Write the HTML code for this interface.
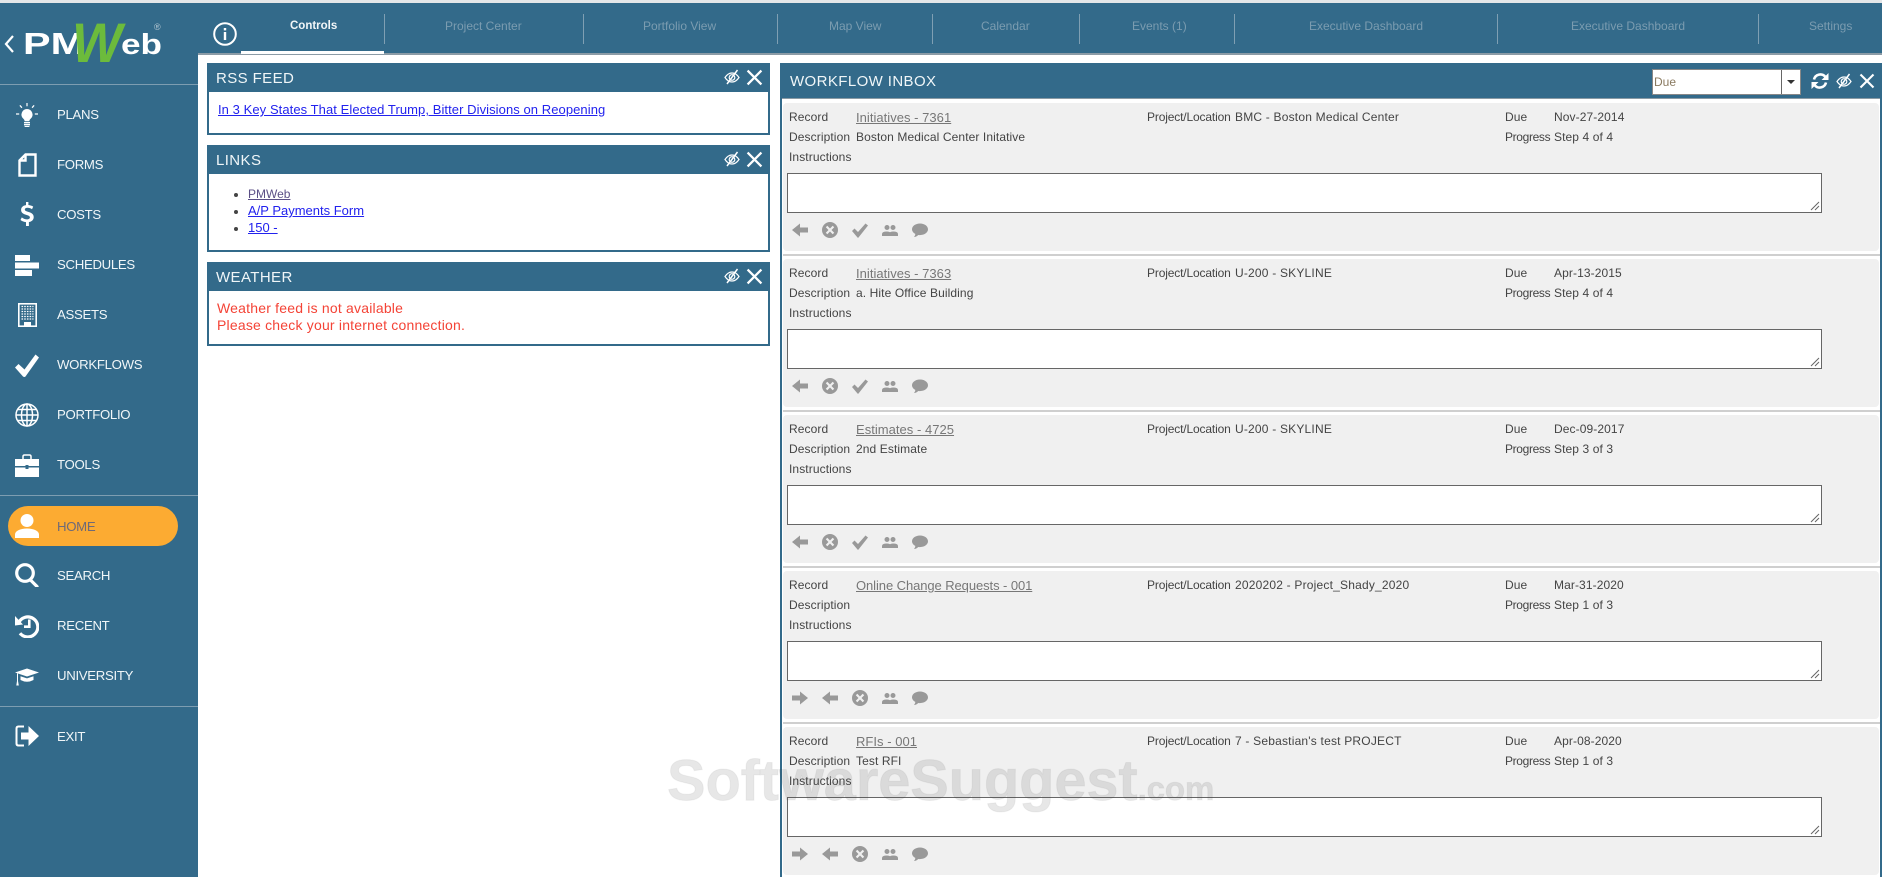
<!DOCTYPE html>
<html><head><meta charset="utf-8"><title>PMWeb</title>
<style>
*{box-sizing:border-box}
html,body{margin:0;padding:0;width:1882px;height:877px;overflow:hidden;background:#fff;font-family:"Liberation Sans",sans-serif;color:#444}
.a{position:absolute;white-space:nowrap}
#top{position:absolute;left:0;top:0;width:1882px;height:54px;background:#336a8a;border-top:3px solid #e4e6e8}
#line{position:absolute;left:198px;top:53px;width:1684px;height:2px;background:#8b9ba6}
#ul{position:absolute;left:241px;top:51px;width:143px;height:3px;background:#fff}
#side{position:absolute;left:0;top:54px;width:198px;height:823px;background:#336a8a}
.sep{position:absolute;top:14px;width:1px;height:30px;background:#7f9fb3}
.t{position:absolute;top:18px;font-size:12px;line-height:16px;color:#7b9cb0;white-space:nowrap;transform-origin:0 50%}
.hr{position:absolute;left:0;width:198px;height:1px;background:#7d9db1}
.n{position:absolute;left:57px;font-size:13.2px;line-height:18px;color:#f0f6f8;white-space:nowrap;letter-spacing:-.3px;margin-top:1px}
.i{position:absolute;left:15px;width:24px;height:24px;fill:#fff}
.p{position:absolute;left:207px;width:563px;background:#fff;border:2px solid #336a8a}
.ph{position:absolute;left:0;top:0;right:0;height:27px;background:#336a8a}
.pt{position:absolute;left:7px;top:4px;font-size:15px;line-height:20px;color:#f0f6f8;letter-spacing:.4px}
.ey{position:absolute;left:515px;top:4px;width:16px;height:16px}
.xx{position:absolute;left:537px;top:4px;width:17px;height:17px}
a{color:#2222ee;text-decoration:underline}
.tx{position:absolute;font-size:12px;line-height:16px;color:#444;white-space:nowrap}
.p .tx{font-size:13px}
.c{position:absolute;left:783px;width:1096px;height:148px;background:#f0f0f0;border-radius:4px}
.c .tx{letter-spacing:.1px}
.c .tx a{font-size:13px;letter-spacing:.03px}
.c .pl{letter-spacing:-.15px}
.c .pr{letter-spacing:-.35px}
.c .pv{letter-spacing:.2px}
.sl{position:absolute;left:783px;width:1097px;height:1px;background:#cfcfcf}
.ta{position:absolute;left:4px;top:70px;width:1035px;height:40px;background:#fff;border:1px solid #666}
.ta svg{position:absolute;right:1px;bottom:1px}
.g{position:absolute;top:119px;width:16px;height:16px;fill:#999}
#wm{position:absolute;left:667px;top:746px;font-size:57.8px;line-height:70px;font-weight:bold;color:rgba(70,70,70,.13);white-space:nowrap;letter-spacing:-.1px;-webkit-text-stroke:1px rgba(70,70,70,.06)}
#wm span{font-size:33px}
</style></head><body>
<div id="top"></div>
<div id="side"></div>
<div id="line"></div><div id="ul"></div>

<svg class="a" style="left:0;top:18px" width="190" height="50" viewBox="0 18 190 50">
<path d="M13 36L6 44L13 52" fill="none" stroke="#fff" stroke-width="2.2"/>
<text x="23" y="54" font-family="Liberation Sans" font-weight="bold" font-size="31" fill="#fff" textLength="62" lengthAdjust="spacingAndGlyphs">PM</text>
<text x="121" y="54" font-family="Liberation Sans" font-weight="bold" font-size="29" fill="#fff" textLength="41" lengthAdjust="spacingAndGlyphs">eb</text>
<text x="72" y="62" font-family="Liberation Sans" font-style="italic" font-weight="bold" font-size="56" fill="#6cbb3c" textLength="50" lengthAdjust="spacingAndGlyphs">W</text>
<text x="154" y="30" font-family="Liberation Sans" font-size="9" fill="#b5c8d3">®</text>
</svg>
<svg class="a" style="left:212px;top:21px" width="26" height="26" viewBox="0 0 26 26"><circle cx="13" cy="13" r="10.8" fill="none" stroke="#fff" stroke-width="2"/><rect x="11.8" y="11" width="2.4" height="8" fill="#fff"/><rect x="11.8" y="7" width="2.4" height="2.4" fill="#fff"/></svg>

<div class="t" style="left:290px;color:#f2f6f8;font-weight:bold;font-size:11.5px">Controls</div>
<div class="sep" style="left:384px"></div><div class="t" style="left:445px">Project Center</div>
<div class="sep" style="left:583px"></div><div class="t" style="left:643px">Portfolio View</div>
<div class="sep" style="left:777px"></div><div class="t" style="left:829px">Map View</div>
<div class="sep" style="left:932px"></div><div class="t" style="left:981px">Calendar</div>
<div class="sep" style="left:1079px"></div><div class="t" style="left:1132px">Events (1)</div>
<div class="sep" style="left:1234px"></div><div class="t" style="left:1309px">Executive Dashboard</div>
<div class="sep" style="left:1497px"></div><div class="t" style="left:1571px">Executive Dashboard</div>
<div class="sep" style="left:1758px"></div><div class="t" style="left:1809px">Settings</div>

<div class="hr" style="top:84px"></div>
<div class="hr" style="top:495px"></div>
<div class="hr" style="top:706px"></div>
<div class="a" style="left:8px;top:506px;width:170px;height:40px;border-radius:20px;background:#fcab32"></div>

<div class="n" style="top:105px">PLANS</div>
<div class="n" style="top:155px">FORMS</div>
<div class="n" style="top:205px">COSTS</div>
<div class="n" style="top:255px">SCHEDULES</div>
<div class="n" style="top:305px">ASSETS</div>
<div class="n" style="top:355px">WORKFLOWS</div>
<div class="n" style="top:405px">PORTFOLIO</div>
<div class="n" style="top:455px">TOOLS</div>
<div class="n" style="top:517px;color:#6f6a78">HOME</div>
<div class="n" style="top:566px">SEARCH</div>
<div class="n" style="top:616px">RECENT</div>
<div class="n" style="top:666px">UNIVERSITY</div>
<div class="n" style="top:727px">EXIT</div>

<svg class="i" style="top:103px" viewBox="0 0 24 24"><path d="M12 6a5.6 5.6 0 0 0-3.6 9.8c.9.8 1.2 1.6 1.2 2.4h4.8c0-.8.3-1.6 1.2-2.4A5.6 5.6 0 0 0 12 6z"/><rect x="9" y="19" width="6" height="1.4"/><rect x="9" y="21" width="6" height="1.4"/><rect x="9.6" y="23" width="4.8" height="1"/><path d="M11.4 0h1.2v3.2h-1.2zM4.4 2.8l1-.8 2 2.3-1 .8zM19.6 2.8l-1-.8-2 2.3 1 .8zM1 10.4h3.2v1.2H1zM19.8 10.4H23v1.2h-3.2z"/></svg>
<svg class="i" style="top:153px" viewBox="0 0 24 24"><path d="M4.5 7.5L10.5 1.5H20.5V22.5H4.5Z M10.5 1.5V7.5H4.5" fill="none" stroke="#fff" stroke-width="2.4"/></svg>
<svg class="i" style="top:202px" viewBox="0 0 24 24"><path d="M11 0h2.4v3c2 .2 3.600 .8 4.800 1.600l-1.200 2.600c-1.400-.9-3-1.400-4.500-1.400-1.700 0-2.700.6-2.700 1.700 0 1.200 1.200 1.700 3.500 2.400 3.200 1 5.400 2.100 5.400 5.200 0 2.800-2 4.500-4.800 4.900V24H11v-3.900c-2.200-.2-4.200-1-5.500-2.100l1.300-2.600c1.500 1.200 3.500 2 5.100 2 1.900 0 3-.8 3-2 0-1.300-1.300-1.800-3.600-2.500-3.100-1-5.200-2.100-5.200-5 0-2.600 1.900-4.400 4.900-4.800z"/></svg>
<svg class="i" style="top:253px" viewBox="0 0 24 24"><rect x="0" y="2" width="15" height="6"/><rect x="0" y="9.500" width="24" height="6"/><rect x="0" y="17" width="17" height="6"/></svg>
<svg class="i" style="top:303px" viewBox="0 0 24 24"><rect x="3.800" y=".8" width="17.400" height="22.400" fill="none" stroke="#fff" stroke-width="1.600"/><path d="M6.500 3.500h12M6.500 6h12M6.500 8.500h12M6.500 11h12M6.500 13.500h12M6.500 16h12" stroke="#fff" stroke-width="1.300" stroke-dasharray="1.600 1.100" fill="none"/><rect x="9" y="19" width="7" height="5"/></svg>
<svg class="i" style="top:353px" viewBox="0 0 24 24"><path d="M0 14.500L3.500 11 9.500 16.500 20.500 1.500 24 4.500 10.500 23.500Q9.500 24.500 8 23.500Z"/></svg>
<svg class="i" style="top:403px" viewBox="0 0 24 24" fill="none"><g fill="none" stroke="#fff" stroke-width="1.500"><circle cx="12" cy="12" r="11"/><ellipse cx="12" cy="12" rx="5.500" ry="11"/><path d="M12 1v22M1.300 12h21.400M2.700 6.500h18.600M2.700 17.500h18.600"/></g></svg>
<svg class="i" style="top:453px" viewBox="0 0 24 24"><path d="M0 6h24v7H13.500v-1h-3v1H0zM0 14.500h10.500v1.500h3v-1.500H24V24H0z"/><path d="M8 6V3.500Q8 2 9.500 2h5Q16 2 16 3.500V6" fill="none" stroke="#fff" stroke-width="1.500"/></svg>
<svg class="i" style="top:514px" viewBox="0 0 24 24"><circle cx="12" cy="6.500" r="6.500"/><path d="M0 24v-3.500C0 17 5 14.500 12 14.500S24 17 24 20.500V24z"/></svg>
<svg class="i" style="top:563px" viewBox="0 0 24 24"><circle cx="10" cy="10" r="8.300" fill="none" stroke="#fff" stroke-width="3.200"/><path d="M16 17.500L22 23.500" stroke="#fff" stroke-width="3.200" stroke-linecap="round"/></svg>
<svg class="i" style="top:614px" viewBox="0 0 24 24"><path d="M3.600 9A10 10 0 1 1 5 19.200" fill="none" stroke="#fff" stroke-width="3.200"/><path d="M0 2l8 8.500-8 1z"/><path d="M13 5.500h2.600V14H9v-2.600h4z"/></svg>
<svg class="i" style="top:663px" viewBox="0 0 24 24"><path d="M0 9.500L12 5.500 24 9.500 12 13.500z"/><path d="M5.500 13.200L12 15.400 18.500 13.200V17Q12 20.500 5.500 17z"/><path d="M2 10.500h1V18l.8 4.500H1.300L2 18z"/></svg>
<svg class="i" style="top:724px" viewBox="0 0 24 24"><path d="M9 2.500H3.500Q1.500 2.500 1.500 4.500V19.500Q1.500 21.500 3.500 21.500H9" fill="none" stroke="#fff" stroke-width="2"/><path d="M6 8.500h7.500V2L24 12 13.500 22v-6.500H6z"/></svg>

<!-- panels -->
<div class="p" style="top:63px;height:72px"><div class="ph"></div><div class="pt">RSS FEED</div>
<svg class="ey" viewBox="0 0 16 16"><use href="#eye"/></svg><svg class="xx" viewBox="0 0 16 16"><use href="#x"/></svg>
<div class="tx" style="left:9px;top:37px;letter-spacing:.07px"><a href="#">In 3 Key States That Elected Trump, Bitter Divisions on Reopening</a></div></div>

<div class="p" style="top:145px;height:107px"><div class="ph"></div><div class="pt">LINKS</div>
<svg class="ey" viewBox="0 0 16 16"><use href="#eye"/></svg><svg class="xx" viewBox="0 0 16 16"><use href="#x"/></svg>
<div class="a" style="left:25px;top:46px;width:4px;height:4px;border-radius:50%;background:#444"></div>
<div class="a" style="left:25px;top:63px;width:4px;height:4px;border-radius:50%;background:#444"></div>
<div class="a" style="left:25px;top:80px;width:4px;height:4px;border-radius:50%;background:#444"></div>
<div class="tx" style="left:39px;top:39px"><a href="#" style="color:#5b4f86;font-size:12px">PMWeb</a></div>
<div class="tx" style="left:39px;top:56px"><a href="#">A/P Payments Form</a></div>
<div class="tx" style="left:39px;top:73px"><a href="#">150 -</a></div></div>

<div class="p" style="top:262px;height:84px"><div class="ph"></div><div class="pt">WEATHER</div>
<svg class="ey" viewBox="0 0 16 16"><use href="#eye"/></svg><svg class="xx" viewBox="0 0 16 16"><use href="#x"/></svg>
<div class="tx" style="left:8px;top:36px;color:#f44336;font-size:14px;line-height:17px;letter-spacing:.2px;white-space:normal;width:500px">Weather feed is not available<br>Please check your internet connection.</div></div>

<svg width="0" height="0" style="position:absolute"><defs>
<g id="eye" fill="none" stroke="#fff"><path d="M1 8.500C3 5.500 5.500 4 8 4s5 1.500 7 4.500c-2 3-4.500 4.500-7 4.500S3 11.500 1 8.500z" stroke-width="1.200"/><circle cx="8" cy="8.500" r="2.800" stroke-width="1.200"/><path d="M3 15L13.500 1" stroke-width="1.500"/></g>
<path id="x" d="M1.500 1.500L14.500 14.500M14.500 1.500L1.500 14.500" stroke="#fff" stroke-width="2.100" fill="none"/>
<path id="gl" d="M16 5.500H8V1.500L0 8l8 6.500v-4h8z"/>
<path id="gr" d="M0 5.500h8V1.500L16 8l-8 6.500v-4H0z"/>
<path id="gx" fill-rule="evenodd" d="M8 0a8 8 0 1 1 0 16A8 8 0 0 1 8 0zM5.300 3.800L3.800 5.300 6.500 8 3.800 10.700l1.500 1.500L8 9.500l2.700 2.700 1.500-1.500L9.500 8l2.700-2.700-1.500-1.500L8 6.500z"/>
<path id="gc" d="M0 9l2.500-2.500L6 10 13.500 1.500 16 3.500 6.500 15.500Q6 16 5.500 15.500z"/>
<path id="gp" d="M5 3a2.500 2.500 0 1 1 0 5 2.500 2.500 0 0 1 0-5zM11 3a2.500 2.500 0 1 1 0 5 2.500 2.500 0 0 1 0-5zM0 14v-2Q0 9.500 5 9.500q2.200 0 3 .8.800-.8 3-.8 5 0 5 2.500v2z"/>
<path id="gs" d="M8 1.500c4.400 0 8 2.500 8 5.800s-3.600 5.800-8 5.800c-.6 0-1.200 0-1.800-.1C5 14.200 3.500 15 2 15c.8-.8 1.300-2 1.300-3.100C1.300 10.900 0 9.200 0 7.300 0 4 3.600 1.500 8 1.500z"/>
<path id="rs" d="M1 9L9 1M5 9L9 5" stroke="#666" stroke-width="1" fill="none"/>
</defs></svg>

<!-- workflow -->
<div class="a" style="left:780px;top:63px;width:1102px;height:814px;border-left:2px solid #336a8a;border-right:2px solid #336a8a"></div>
<div class="a" style="left:780px;top:63px;width:1102px;height:35px;background:#336a8a"></div>
<div class="a" style="left:782px;top:98px;width:1098px;height:1px;background:#8a9aa4"></div>
<div class="a" style="left:790px;top:72px;font-size:15px;line-height:20px;color:#f0f6f8;letter-spacing:.4px">WORKFLOW INBOX</div>
<div class="a" style="left:1652px;top:69px;width:149px;height:26px;background:#fff;border:1px solid #888"></div>
<div class="a" style="left:1654px;top:74px;font-size:12px;line-height:16px;color:#8a7a60">Due</div>
<div class="a" style="left:1781px;top:70px;width:1px;height:24px;background:#666"></div>
<div class="a" style="left:1787px;top:80px;width:0;height:0;border-left:4px solid transparent;border-right:4px solid transparent;border-top:4px solid #333"></div>
<svg class="a" style="left:1811px;top:72px" width="18" height="18" viewBox="0 0 18 18"><path d="M3 7.500A6.500 6.500 0 0 1 14.500 5M15 10.500A6.500 6.500 0 0 1 3.500 13" fill="none" stroke="#fff" stroke-width="2.600"/><path d="M17.500 1v7h-7zM.5 17v-7h7z" fill="#fff"/></svg>
<svg class="a" style="left:1836px;top:73px" width="16" height="16" viewBox="0 0 16 16"><use href="#eye"/></svg>
<svg class="a" style="left:1859px;top:73px" width="16" height="16" viewBox="0 0 16 16"><use href="#x"/></svg>

<div class="sl" style="top:254px;height:2px"></div>
<div class="sl" style="top:410px;height:2px"></div>
<div class="sl" style="top:566px;height:2px"></div>
<div class="sl" style="top:722px;height:2px"></div>

<!-- card 1 -->
<div class="c" style="top:103px">
<div class="tx" style="left:6px;top:6px">Record</div><div class="tx" style="left:73px;top:7px"><a href="#" style="color:#777">Initiatives - 7361</a></div>
<div class="tx pl" style="left:364px;top:6px">Project/Location</div><div class="tx pv" style="left:452px;top:6px">BMC - Boston Medical Center</div>
<div class="tx" style="left:722px;top:6px">Due</div><div class="tx" style="left:771px;top:6px">Nov-27-2014</div>
<div class="tx" style="left:6px;top:26px">Description</div><div class="tx" style="left:73px;top:26px">Boston Medical Center Initative</div>
<div class="tx pr" style="left:722px;top:26px">Progress</div><div class="tx" style="left:771px;top:26px">Step 4 of 4</div>
<div class="tx" style="left:6px;top:46px">Instructions</div>
<div class="ta"><svg width="10" height="10" viewBox="0 0 10 10"><use href="#rs"/></svg></div>
<svg class="g" style="left:9px" viewBox="0 0 16 16"><use href="#gl"/></svg><svg class="g" style="left:39px" viewBox="0 0 16 16"><use href="#gx"/></svg><svg class="g" style="left:69px" viewBox="0 0 16 16"><use href="#gc"/></svg><svg class="g" style="left:99px" viewBox="0 0 16 16"><use href="#gp"/></svg><svg class="g" style="left:129px" viewBox="0 0 16 16"><use href="#gs"/></svg>
</div>
<!-- card 2 -->
<div class="c" style="top:259px">
<div class="tx" style="left:6px;top:6px">Record</div><div class="tx" style="left:73px;top:7px"><a href="#" style="color:#777">Initiatives - 7363</a></div>
<div class="tx pl" style="left:364px;top:6px">Project/Location</div><div class="tx pv" style="left:452px;top:6px">U-200 - SKYLINE</div>
<div class="tx" style="left:722px;top:6px">Due</div><div class="tx" style="left:771px;top:6px">Apr-13-2015</div>
<div class="tx" style="left:6px;top:26px">Description</div><div class="tx" style="left:73px;top:26px">a. Hite Office Building</div>
<div class="tx pr" style="left:722px;top:26px">Progress</div><div class="tx" style="left:771px;top:26px">Step 4 of 4</div>
<div class="tx" style="left:6px;top:46px">Instructions</div>
<div class="ta"><svg width="10" height="10" viewBox="0 0 10 10"><use href="#rs"/></svg></div>
<svg class="g" style="left:9px" viewBox="0 0 16 16"><use href="#gl"/></svg><svg class="g" style="left:39px" viewBox="0 0 16 16"><use href="#gx"/></svg><svg class="g" style="left:69px" viewBox="0 0 16 16"><use href="#gc"/></svg><svg class="g" style="left:99px" viewBox="0 0 16 16"><use href="#gp"/></svg><svg class="g" style="left:129px" viewBox="0 0 16 16"><use href="#gs"/></svg>
</div>
<!-- card 3 -->
<div class="c" style="top:415px">
<div class="tx" style="left:6px;top:6px">Record</div><div class="tx" style="left:73px;top:7px"><a href="#" style="color:#777">Estimates - 4725</a></div>
<div class="tx pl" style="left:364px;top:6px">Project/Location</div><div class="tx pv" style="left:452px;top:6px">U-200 - SKYLINE</div>
<div class="tx" style="left:722px;top:6px">Due</div><div class="tx" style="left:771px;top:6px">Dec-09-2017</div>
<div class="tx" style="left:6px;top:26px">Description</div><div class="tx" style="left:73px;top:26px">2nd Estimate</div>
<div class="tx pr" style="left:722px;top:26px">Progress</div><div class="tx" style="left:771px;top:26px">Step 3 of 3</div>
<div class="tx" style="left:6px;top:46px">Instructions</div>
<div class="ta"><svg width="10" height="10" viewBox="0 0 10 10"><use href="#rs"/></svg></div>
<svg class="g" style="left:9px" viewBox="0 0 16 16"><use href="#gl"/></svg><svg class="g" style="left:39px" viewBox="0 0 16 16"><use href="#gx"/></svg><svg class="g" style="left:69px" viewBox="0 0 16 16"><use href="#gc"/></svg><svg class="g" style="left:99px" viewBox="0 0 16 16"><use href="#gp"/></svg><svg class="g" style="left:129px" viewBox="0 0 16 16"><use href="#gs"/></svg>
</div>
<!-- card 4 -->
<div class="c" style="top:571px">
<div class="tx" style="left:6px;top:6px">Record</div><div class="tx" style="left:73px;top:7px"><a href="#" style="color:#777;letter-spacing:-.08px">Online Change Requests - 001</a></div>
<div class="tx pl" style="left:364px;top:6px">Project/Location</div><div class="tx pv" style="left:452px;top:6px">2020202 - Project_Shady_2020</div>
<div class="tx" style="left:722px;top:6px">Due</div><div class="tx" style="left:771px;top:6px">Mar-31-2020</div>
<div class="tx" style="left:6px;top:26px">Description</div>
<div class="tx pr" style="left:722px;top:26px">Progress</div><div class="tx" style="left:771px;top:26px">Step 1 of 3</div>
<div class="tx" style="left:6px;top:46px">Instructions</div>
<div class="ta"><svg width="10" height="10" viewBox="0 0 10 10"><use href="#rs"/></svg></div>
<svg class="g" style="left:9px" viewBox="0 0 16 16"><use href="#gr"/></svg><svg class="g" style="left:39px" viewBox="0 0 16 16"><use href="#gl"/></svg><svg class="g" style="left:69px" viewBox="0 0 16 16"><use href="#gx"/></svg><svg class="g" style="left:99px" viewBox="0 0 16 16"><use href="#gp"/></svg><svg class="g" style="left:129px" viewBox="0 0 16 16"><use href="#gs"/></svg>
</div>
<!-- card 5 -->
<div class="c" style="top:727px">
<div class="tx" style="left:6px;top:6px">Record</div><div class="tx" style="left:73px;top:7px"><a href="#" style="color:#777">RFIs - 001</a></div>
<div class="tx pl" style="left:364px;top:6px">Project/Location</div><div class="tx pv" style="left:452px;top:6px">7 - Sebastian's test PROJECT</div>
<div class="tx" style="left:722px;top:6px">Due</div><div class="tx" style="left:771px;top:6px">Apr-08-2020</div>
<div class="tx" style="left:6px;top:26px">Description</div><div class="tx" style="left:73px;top:26px">Test RFI</div>
<div class="tx pr" style="left:722px;top:26px">Progress</div><div class="tx" style="left:771px;top:26px">Step 1 of 3</div>
<div class="tx" style="left:6px;top:46px">Instructions</div>
<div class="ta"><svg width="10" height="10" viewBox="0 0 10 10"><use href="#rs"/></svg></div>
<svg class="g" style="left:9px" viewBox="0 0 16 16"><use href="#gr"/></svg><svg class="g" style="left:39px" viewBox="0 0 16 16"><use href="#gl"/></svg><svg class="g" style="left:69px" viewBox="0 0 16 16"><use href="#gx"/></svg><svg class="g" style="left:99px" viewBox="0 0 16 16"><use href="#gp"/></svg><svg class="g" style="left:129px" viewBox="0 0 16 16"><use href="#gs"/></svg>
</div>

<div id="wm">SoftwareSuggest<span>.com</span></div>
</body></html>
